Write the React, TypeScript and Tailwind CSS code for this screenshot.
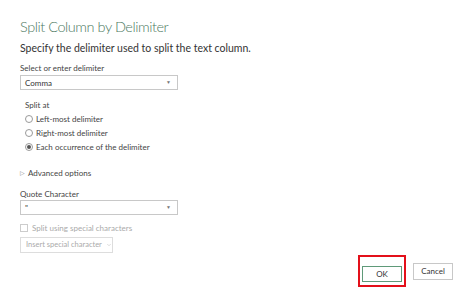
import { ChevronDown } from "lucide-react";

function Select({ value }: { value: string }) {
  return (
    <div className="flex h-[15px] w-[158px] items-center justify-between border border-[#c8c8c8] bg-white pl-[4px] pr-[6px] text-[8px] text-[#333]">
      <span className="leading-none">{value}</span>
      <span className="text-[5px] leading-none text-[#777]">▼</span>
    </div>
  );
}

function Radio({ label, checked }: { label: string; checked?: boolean }) {
  return (
    <div className="flex items-center gap-[3px]">
      <span className="flex h-[8px] w-[8px] items-center justify-center rounded-full border border-[#9a9a9a] bg-white">
        {checked && <span className="h-[4px] w-[4px] rounded-full bg-[#555]" />}
      </span>
      <span>{label}</span>
    </div>
  );
}

export default function App() {
  return (
    <div
      className="flex h-[304px] w-[474px] flex-col bg-white pl-[20px] pr-[20px] text-[#333]"
      style={{ fontFamily: "Lato, 'Open Sans', sans-serif" }}
    >
      {/* header */}
      <h1 className="mt-[16px] text-[14.5px] font-light leading-[22px] tracking-[-0.45px] text-[#4d7a62]">
        Split Column by Delimiter
      </h1>
      <p className="mt-[3px] text-[10.5px] leading-[14px] text-[#333]">
        Specify the delimiter used to split the text column.
      </p>

      {/* delimiter */}
      <div className="mt-[7px] text-[8px] leading-[12px] text-[#444]">Select or enter delimiter</div>
      <div className="mt-[1px]">
        <Select value="Comma" />
      </div>

      {/* split at */}
      <div className="mt-[9px] flex flex-col gap-[2px] pl-[5px] text-[8px] leading-[12px] text-[#444]">
        <div>Split at</div>
        <Radio label="Left-most delimiter" />
        <Radio label="Right-most delimiter" />
        <Radio label="Each occurrence of the delimiter" checked />
      </div>

      {/* advanced */}
      <div className="mt-[14px] flex items-center gap-[3px] text-[8px] leading-[12px] text-[#444]">
        <span className="text-[6px] text-[#888]">▷</span>
        <span>Advanced options</span>
      </div>

      {/* quote */}
      <div className="mt-[9px] text-[8px] leading-[12px] text-[#444]">Quote Character</div>
      <div>
        <Select value={'"'} />
      </div>

      <div className="mt-[7px] flex items-center gap-[4px] text-[8px] leading-[12px] text-[#aaa]">
        <span className="h-[8px] w-[8px] border border-[#ccc]" />
        <span>Split using special characters</span>
      </div>
      <div className="mt-[3px] flex h-[16px] w-[93px] items-center gap-[4px] whitespace-nowrap border border-[#ddd] pl-[5px] text-[7.5px] text-[#aaa]">
        <span>Insert special character</span>
        <ChevronDown size={6} className="text-[#bbb]" />
      </div>

      {/* footer */}
      <div className="mt-auto mb-[17px] flex items-center justify-end gap-[7px] pr-[1px]">
        <div className="border-2 border-[#e3101a] p-[2px]">
          <button className="h-[16px] w-[40px] border border-[#5f9a79] bg-white text-[8px] text-[#333]">OK</button>
        </div>
        <button className="h-[17px] w-[40px] border border-[#c8c8c8] bg-white text-[8px] text-[#333]">Cancel</button>
      </div>
    </div>
  );
}
